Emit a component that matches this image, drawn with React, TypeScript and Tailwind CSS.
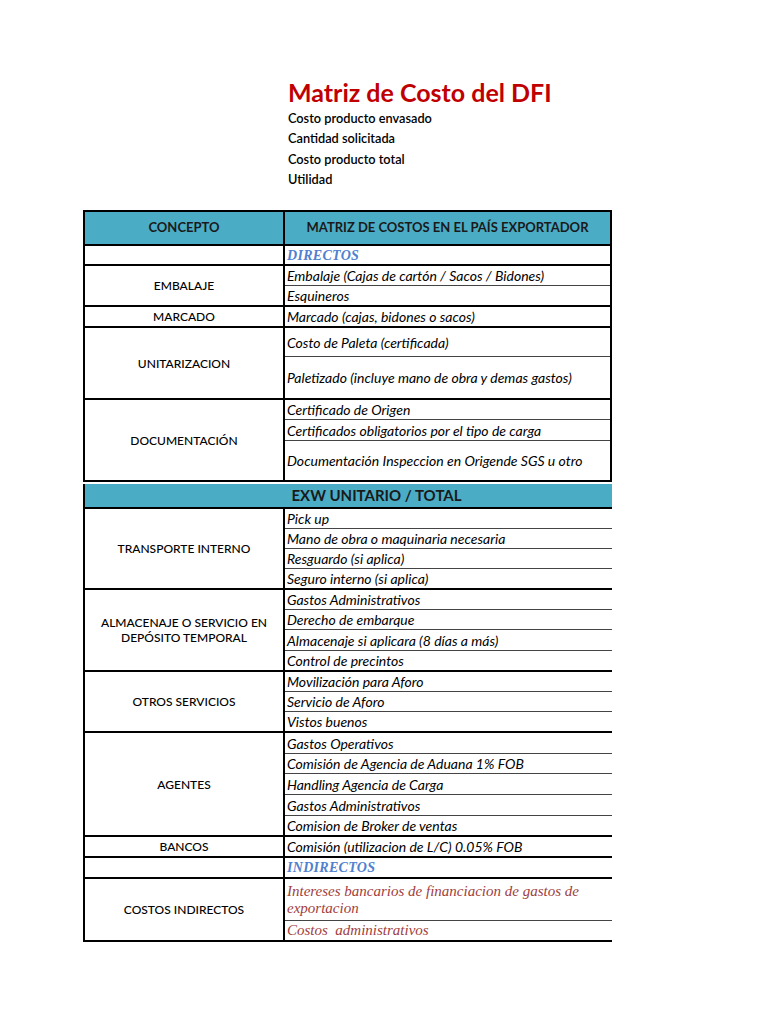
import React from 'react';

type Sub = { text: string; h: number; kind?: 'dir' | 'ind' | 'red' };
type Group = { label: React.ReactNode; rows: Sub[]; closed?: boolean };

const top: Group[] = [
  { label: '', rows: [{ text: 'DIRECTOS', h: 20, kind: 'dir' }], closed: true },
  {
    label: 'EMBALAJE',
    rows: [
      { text: 'Embalaje (Cajas de cartón / Sacos / Bidones)', h: 20 },
      { text: 'Esquineros', h: 21 },
    ],
    closed: true,
  },
  { label: 'MARCADO', rows: [{ text: 'Marcado (cajas, bidones o sacos)', h: 21 }], closed: true },
  {
    label: 'UNITARIZACION',
    rows: [
      { text: 'Costo de Paleta (certificada)', h: 29 },
      { text: 'Paletizado (incluye mano de obra y demas gastos)', h: 43 },
    ],
    closed: true,
  },
  {
    label: 'DOCUMENTACIÓN',
    rows: [
      { text: 'Certificado de Origen', h: 20 },
      { text: 'Certificados obligatorios por el tipo de carga', h: 21 },
      { text: 'Documentación Inspeccion en Origende SGS u otro', h: 41 },
    ],
    closed: true,
  },
];

const bottom: Group[] = [
  {
    label: 'TRANSPORTE INTERNO',
    rows: [
      { text: 'Pick up', h: 20 },
      { text: 'Mano de obra o maquinaria necesaria', h: 20 },
      { text: 'Resguardo (si aplica)', h: 20 },
      { text: 'Seguro interno (si aplica)', h: 21 },
    ],
  },
  {
    label: (
      <>
        ALMACENAJE O SERVICIO EN
        <br />
        DEPÓSITO TEMPORAL
      </>
    ),
    rows: [
      { text: 'Gastos Administrativos', h: 20 },
      { text: 'Derecho de embarque', h: 20 },
      { text: 'Almacenaje si aplicara (8 días a más)', h: 21 },
      { text: 'Control de precintos', h: 21 },
    ],
  },
  {
    label: 'OTROS SERVICIOS',
    rows: [
      { text: 'Movilización para Aforo', h: 20 },
      { text: 'Servicio de Aforo', h: 20 },
      { text: 'Vistos buenos', h: 21 },
    ],
  },
  {
    label: 'AGENTES',
    rows: [
      { text: 'Gastos Operativos', h: 21 },
      { text: 'Comisión de Agencia de Aduana 1% FOB', h: 20 },
      { text: 'Handling Agencia de Carga', h: 21 },
      { text: 'Gastos Administrativos', h: 21 },
      { text: 'Comision de Broker de ventas', h: 21 },
    ],
  },
  { label: 'BANCOS', rows: [{ text: 'Comisión (utilizacion de L/C) 0.05% FOB', h: 21 }] },
  { label: '', rows: [{ text: 'INDIRECTOS', h: 21, kind: 'ind' }] },
  {
    label: 'COSTOS INDIRECTOS',
    rows: [
      { text: 'Intereses bancarios de financiacion de gastos de exportacion', h: 42, kind: 'red' },
      { text: 'Costos  administrativos', h: 21, kind: 'red' },
    ],
  },
];

const sans = "font-['Lato','Noto_Sans',sans-serif]";

function SubRow({ row, last }: { row: Sub; last: boolean }) {
  let cls = `${sans} italic text-[14px] text-black`;
  if (row.kind === 'dir' || row.kind === 'ind') {
    cls = "font-['Liberation_Serif',serif] italic font-bold text-[14px] text-[#4f81d0] tracking-[0.3px]";
  }
  if (row.kind === 'red') {
    cls = "font-['Liberation_Serif',serif] italic text-[15px] leading-[17px] text-[#a0403e] whitespace-pre-wrap";
  }
  return (
    <div
      className={`flex items-center pl-[2px] pr-2 ${last ? '' : 'border-b border-[#444]'}`}
      style={{ height: last ? row.h - 2 : row.h }}
    >
      <span className={cls}>{row.text}</span>
    </div>
  );
}

function GroupRow({ g }: { g: Group }) {
  return (
    <div className="flex border-b-2 border-black">
      <div
        className={`${sans} w-[202px] shrink-0 border-l-2 border-r-2 border-black flex items-center justify-center text-center text-[12px] leading-[15px] font-medium text-black`}
      >
        {g.label}
      </div>
      <div className={`flex-1 flex flex-col ${g.closed ? 'border-r-2 border-black' : ''}`}>
        {g.rows.map((r, i) => (
          <SubRow key={i} row={r} last={i === g.rows.length - 1} />
        ))}
      </div>
    </div>
  );
}

export default function App() {
  return (
    <div className="w-[768px] h-[1024px] bg-white relative">
      <div className="pl-[288px] pt-[77px]">
        <h1 className={`${sans} font-bold text-[25px] leading-[31px] text-[#c00000]`}>Matriz de Costo del DFI</h1>
        <div className={`${sans} font-semibold text-[12.75px] leading-[20.3px] text-black`}>
          <div>Costo producto envasado</div>
          <div>Cantidad solicitada</div>
          <div>Costo producto total</div>
          <div>Utilidad</div>
        </div>
      </div>

      <div className="ml-[83px] mt-[21px] w-[529px]">
        <div className={`${sans} flex h-[36px] bg-[#4bacc6] border-2 border-black font-bold text-[13px] text-[#1a1a1a]`}>
          <div className="w-[200px] shrink-0 border-r-2 border-black flex items-center justify-center">CONCEPTO</div>
          <div className="flex-1 flex items-center justify-center">MATRIZ DE COSTOS EN EL PAÍS EXPORTADOR</div>
        </div>
        {top.map((g, i) => (
          <GroupRow key={i} g={g} />
        ))}
        <div
          className={`${sans} h-[25px] mt-[2px] bg-[#4bacc6] border-l-2 border-b-2 border-black flex items-center justify-center pl-[56px] font-bold text-[15px] text-[#1a1a1a]`}
        >
          EXW UNITARIO / TOTAL
        </div>
        {bottom.map((g, i) => (
          <GroupRow key={i} g={g} />
        ))}
      </div>
    </div>
  );
}
